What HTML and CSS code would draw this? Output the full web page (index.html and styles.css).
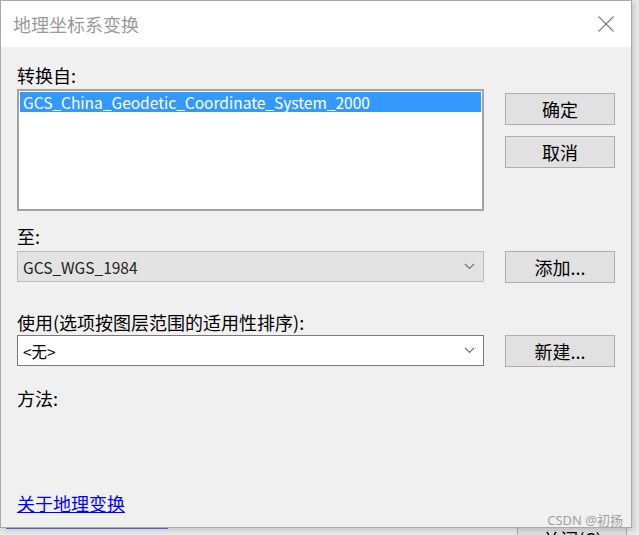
FILE: index.html
```html
<!DOCTYPE html>
<html lang="zh-CN">
<head>
  <meta charset="UTF-8" />
  <meta name="viewport" content="width=device-width, initial-scale=1.0" />
  <title>地理坐标系变换</title>
  <link rel="stylesheet" href="styles.css">
</head>
<body>
  <!-- window behind the dialog -->
  <div class="under-line"></div>
  <div class="under-btn">关闭(C)</div>

  <div class="dialog">
    <div class="titlebar">
      <span class="title">地理坐标系变换</span>
      <svg class="close" width="18" height="18" viewBox="0 0 18 18">
        <path d="M1.5 1.5 L16.5 16.5 M16.5 1.5 L1.5 16.5" stroke="#7a7a7a" stroke-width="1.1" fill="none"/>
      </svg>
    </div>

    <div class="content">
      <!-- 转换自 -->
      <div class="row">
        <div class="main">
          <div class="label">转换自:</div>
          <div class="listbox">
            <div class="list-item selected">GCS_China_Geodetic_Coordinate_System_2000</div>
          </div>
        </div>
        <div class="side side-top">
          <button class="btn">确定</button>
          <button class="btn">取消</button>
        </div>
      </div>

      <!-- 至 -->
      <div class="label label-to">至:</div>
      <div class="row field-row">
        <div class="combo disabled">
          <span>GCS_WGS_1984</span>
          <svg class="chev" width="11" height="7" viewBox="0 0 11 7"><polyline points="1,1 5.5,5.5 10,1" stroke="#707070" stroke-width="1.1" fill="none"/></svg>
        </div>
        <button class="btn side">添加...</button>
      </div>

      <!-- 使用 -->
      <div class="label label-use">使用(选项按图层范围的适用性排序):</div>
      <div class="row field-row use-row">
        <div class="combo">
          <span>&lt;无&gt;</span>
          <svg class="chev" width="11" height="7" viewBox="0 0 11 7"><polyline points="1,1 5.5,5.5 10,1" stroke="#707070" stroke-width="1.1" fill="none"/></svg>
        </div>
        <button class="btn side">新建...</button>
      </div>

      <div class="label label-method">方法:</div>

      <a class="link" href="#">关于地理变换</a>
    </div>
  </div>

  <div class="watermark">CSDN @初扬</div>
</body>
</html>
```

FILE: styles.css
```css
body {
  margin: 0;
  width: 639px;
  height: 535px;
  overflow: hidden;
  position: relative;
  background: #ebebeb;
  font-family: "Noto Sans CJK SC", "Noto Sans", sans-serif;
  color: #000;
}
.dialog {
  position: relative;
  width: 630px;
  height: 526px;
  border: 1px solid #a9a9a9;
  background: #f0f0f0;
  display: flex;
  flex-direction: column;
  box-shadow: 2px 2px 6px rgba(0,0,0,0.18);
}
.titlebar {
  height: 46px;
  background: #fff;
  display: flex;
  align-items: center;
  justify-content: space-between;
  padding: 0 16px 0 12px;
}
.title {
  font-size: 18px;
  color: #999;
  line-height: 20px;
}
.close {
  margin-top: -1px;
}
.content {
  flex: 1;
  display: flex;
  flex-direction: column;
  padding: 18px 0 14px 16px;
}
.row {
  display: flex;
}
.main {
  width: 467px;
}
.label {
  font-size: 18px;
  line-height: 20px;
  height: 20px;
}
.listbox {
  margin-top: 4px;
  height: 116px;
  border: 2px solid #a3a3a3;
  background: #fff;
  padding: 1px;
}
.list-item {
  height: 20px;
  line-height: 20px;
  font-size: 15.5px;
  padding-left: 3px;
}
.selected {
  background: #3399ff;
  color: #fff;
}
.side {
  margin-left: 21px;
  width: 110px;
}
.side-top {
  display: flex;
  flex-direction: column;
  gap: 11px;
  padding-top: 28px;
}
.btn {
  width: 110px;
  height: 32px;
  border: 1px solid #adadad;
  background: #e1e1e1;
  font-family: inherit;
  font-size: 18px;
  color: #000;
  padding: 0;
  line-height: 28px;
}
.label-to {
  margin-top: 15px;
}
.field-row {
  margin-top: 5px;
  align-items: flex-start;
}
.combo {
  width: 467px;
  height: 31px;
  box-sizing: border-box;
  border: 1px solid #7a7a7a;
  background: #fff;
  display: flex;
  align-items: center;
  justify-content: space-between;
  padding: 0 8px 0 5px;
  font-size: 15.5px;
}
.combo.disabled {
  background: #e3e3e3;
  border-color: #bcbcbc;
  color: #222;
}
.label-use {
  margin-top: 29px;
}
.use-row {
  margin-top: 3px;
}
.label-method {
  margin-top: 21px;
}
.link {
  margin-top: auto;
  align-self: flex-start;
  font-size: 18px;
  line-height: 20px;
  color: #0000ff;
  text-decoration: underline;
}
.watermark {
  position: absolute;
  right: 16px;
  top: 510px;
  font-family: "Noto Sans", "Noto Sans CJK SC", sans-serif;
  font-size: 13px;
  color: #a0a0a0;
}
.under-line {
  position: absolute;
  left: 6px;
  top: 528px;
  width: 162px;
  height: 1px;
  background: #6b6bd6;
}
.under-btn {
  position: absolute;
  left: 517px;
  top: 527px;
  width: 108px;
  height: 8px;
  overflow: hidden;
  border: 1px solid #adadad;
  border-bottom: none;
  background: #e1e1e1;
  font-size: 18px;
  text-align: center;
  line-height: 22px;
}
```
